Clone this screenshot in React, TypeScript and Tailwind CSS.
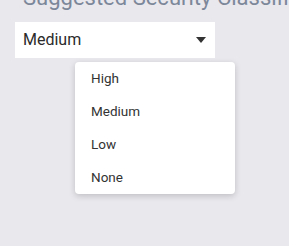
import React from "react";

const options = ["High", "Medium", "Low", "None"];

export default function App() {
  return (
    <div
      className="w-[289px] h-[246px] overflow-hidden bg-[#e9e8ed] relative"
      style={{ fontFamily: "Roboto, sans-serif" }}
    >
      <div className="mt-[-15px] pl-[23px] text-[22px] leading-[26px] text-[#7c879a] whitespace-nowrap">
        Suggested Security Classification
      </div>
      <div className="ml-[15px] mt-[11px] w-[200px] h-[36px] bg-white flex items-center justify-between pl-[8px] pr-[8px] relative">
        <span className="text-[16px] text-[#2b2b2b]">Medium</span>
        <svg width="10" height="6" viewBox="0 0 10 6" className="mr-[1px]">
          <path d="M0 0 L10 0 L5 6 Z" fill="#333" />
        </svg>
        <div className="absolute left-[60px] top-[40px] w-[160px] bg-white rounded-[4px] shadow-[0_2px_6px_rgba(0,0,0,0.18)] z-10">
          {options.map((o) => (
            <div key={o} className="h-[33px] flex items-center px-4 text-[13.5px] text-[#333]">
              {o}
            </div>
          ))}
        </div>
      </div>
    </div>
  );
}
